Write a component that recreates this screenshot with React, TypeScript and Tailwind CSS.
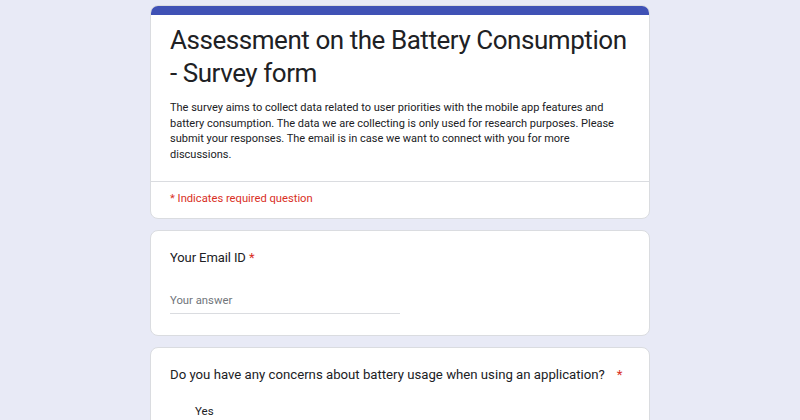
export default function App() {
  return (
    <div className="min-h-screen w-full bg-[#e8eaf6] pt-[5px]" style={{ fontFamily: 'Roboto, "Noto Sans", sans-serif' }}>
      <div className="mx-auto flex w-[500px] flex-col gap-[11px]">
        {/* header card */}
        <div className="overflow-hidden rounded-lg border border-[#dadce0] bg-white">
          <div className="h-[9px] bg-[#3f51b5]" />
          <div className="px-[19px] pt-[9px] pb-[18px]">
            <h1 className="-mr-[10px] text-[26px] leading-[33px] tracking-[-0.45px] text-[#202124]">
              <span className="whitespace-nowrap">Assessment on the Battery Consumption</span>
              <br />- Survey form
            </h1>
            <p className="mt-[10px] text-[11px] leading-[15.7px] text-[#202124]">
              The survey aims to collect data related to user priorities with the mobile app features and battery
              consumption. The data we are collecting is only used for research purposes. Please submit your
              responses. The email is in case we want to connect with you for more discussions.
            </p>
          </div>
          <div className="border-t border-[#dadce0] px-[19px] pt-[9px] pb-[10px] text-[11.2px] text-[#d93025]">
            * Indicates required question
          </div>
        </div>

        {/* email card */}
        <div className="rounded-lg border border-[#dadce0] bg-white px-[19px] pt-[17px] pb-[21px]">
          <div className="text-[13px] tracking-[-0.1px] text-[#202124]">
            Your Email ID <span className="text-[#d93025]">*</span>
          </div>
          <div className="mt-[26px] w-[230px] border-b border-[#dadce0] pb-[3px] text-[11.3px] text-[#70757a]">
            Your answer
          </div>
        </div>

        {/* question card */}
        <div className="rounded-lg border border-[#dadce0] bg-white px-[19px] pt-[17px] pb-[24px]">
          <div className="flex whitespace-nowrap text-[13.2px] text-[#202124]">
            <span>Do you have any concerns about battery usage when using an application?</span>
            <span className="ml-[12px] text-[#d93025]">*</span>
          </div>
          <div className="mt-[18px] pl-[25px] text-[11.5px] text-[#202124]">Yes</div>
        </div>
      </div>
    </div>
  );
}
